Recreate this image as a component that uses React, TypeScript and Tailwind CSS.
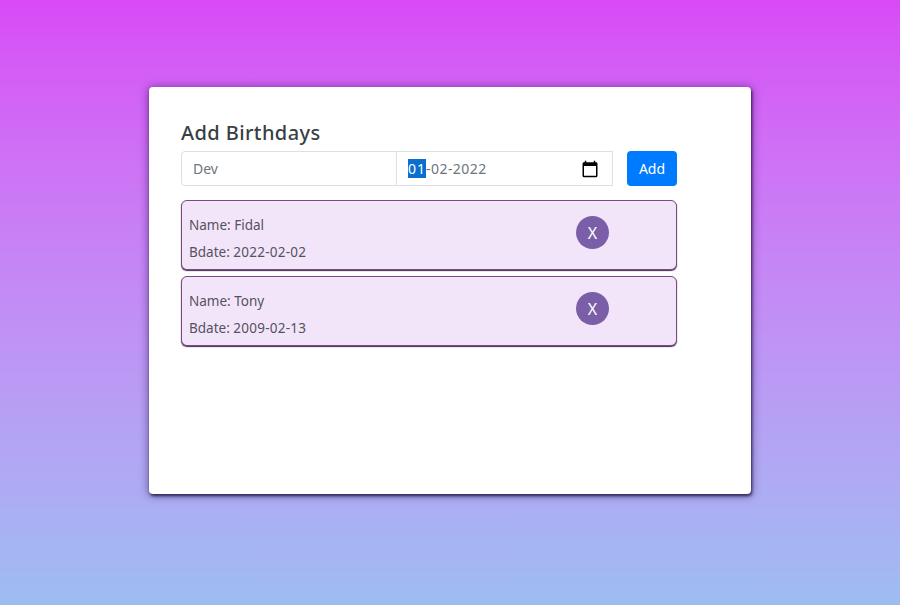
const people = [
  { id: 1, name: "Fidal", bdate: "2022-02-02" },
  { id: 2, name: "Tony", bdate: "2009-02-13" },
];

function CalendarIcon() {
  return (
    <svg width="18" height="18" viewBox="0 0 24 24" className="block">
      <path
        fill="#000"
        d="M20 3h-1V1h-2v2H7V1H5v2H4c-1.100 0-2 .9-2 2v16c0 1.100.9 2 2 2h16c1.100 0 2-.9 2-2V5c0-1.100-.9-2-2-2zm0 18H4V8h16v13z"
      />
    </svg>
  );
}

export default function App() {
  return (
    <div className="h-[605px] w-full flex justify-center pt-[87px] bg-gradient-to-b from-[#d84af6] to-[#9dbdf2] font-['Noto_Sans',sans-serif] text-[#495057]">
      <div className="w-[602px] h-[407px] bg-white rounded-[4px] shadow-[1px_2px_3px_0px_rgba(20,10,60,0.75),0_1px_8px_1px_rgba(40,20,80,0.5)] pt-[32px] pl-[32px]">
        {/* ===== Title ===== */}
        <h1 className="text-[20px] leading-[28px] font-medium tracking-[0.4px] text-[#3a3f45] mb-[4px]">
          Add Birthdays
        </h1>

        {/* ===== Form Row ===== */}
        <div className="flex items-stretch h-[35px] w-[496px]">
          <div className="w-[216px] border border-[#dcdfe3] rounded-l-[4px] flex items-center pl-[11px] text-[14px] text-[#6c757d]">
            Dev
          </div>
          <div className="w-[217px] -ml-px border border-[#dcdfe3] flex items-center pl-[11px] pr-[13px] text-[14px] text-[#6c757d]">
            <span className="bg-[#0a6fcf] text-white h-[19px] leading-[19px] tracking-[1px]">01</span>
            <span className="tracking-[0.45px]">-02-2022</span>
            <span className="ml-auto">
              <CalendarIcon />
            </span>
          </div>
          <button className="ml-auto w-[50px] bg-[#007bff] text-white rounded-[4px] text-[14px]">
            Add
          </button>
        </div>

        {/* ===== Birthday List ===== */}
        <div className="mt-[14px] w-[496px] flex flex-col gap-[6px]">
          {people.map((p) => (
            <div
              key={p.id}
              className="h-[70px] flex items-center bg-[#f3e5f9] border border-[#7a4a80] rounded-[6px] shadow-[0_1px_1px_rgba(50,20,60,0.9)] pl-[7px] text-[13.5px] text-[#53525f]"
            >
              <div className="w-[387px] flex flex-col gap-[7px] pt-[6px]">
                <div className="leading-[20px]">Name: {p.name}</div>
                <div className="leading-[20px]">
                  Bdate: <span className="tracking-[0.25px]">{p.bdate}</span>
                </div>
              </div>
              <button className="w-[33px] h-[33px] -mt-[5px] rounded-full bg-[#7a5fa8] text-white text-[16px] flex items-center justify-center">
                X
              </button>
            </div>
          ))}
        </div>
      </div>
    </div>
  );
}
